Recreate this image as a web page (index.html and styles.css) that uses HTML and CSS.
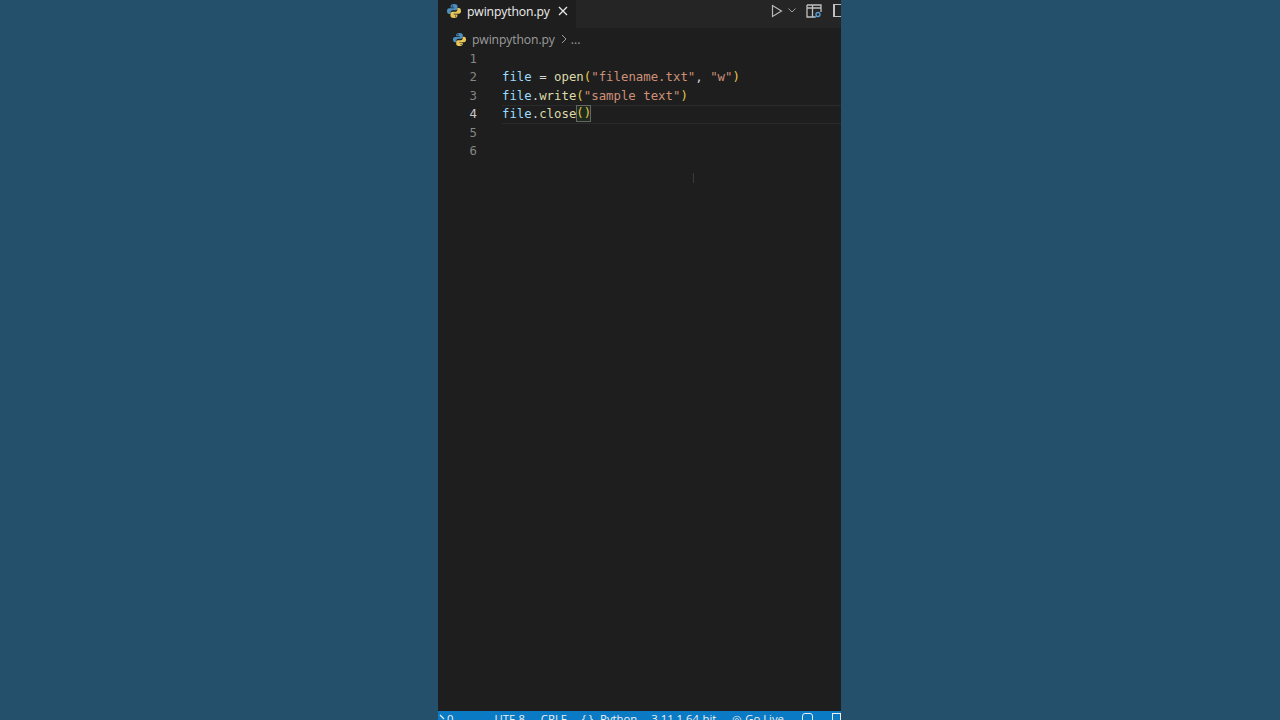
FILE: index.html
```html
<!DOCTYPE html>
<html lang="en">
<head>
<meta charset="utf-8">
<title>pwinpython.py</title>
<link rel="stylesheet" href="styles.css">
</head>
<body>
<main class="window">
  <header class="tabbar">
    <div class="tab">
      <svg class="py-icon" viewBox="0 0 16 16"><path class="py-blue" d="M8 1C5.8 1 4.6 1.800 4.6 3v1.600H8.200v.6H3.200C1.800 5.200 1 6.300 1 8s.8 3 2.200 3h1.400V9.300c0-1.200 1-2.100 2.200-2.100h2.900c1 0 1.800-.8 1.800-1.800V3c0-1.200-1.400-2-3.500-2zM6.300 2.200a.7.7 0 1 1 0 1.400.7.7 0 0 1 0-1.400z"/><path class="py-yellow" d="M8 15c2.200 0 3.400-.8 3.400-2v-1.600H7.800v-.6h5C14.200 10.800 15 9.700 15 8s-.8-3-2.200-3h-1.400v1.700c0 1.200-1 2.100-2.200 2.100H6.300c-1 0-1.800.8-1.800 1.800V13c0 1.200 1.400 2 3.500 2zm1.700-1.200a.7.7 0 1 1 0-1.400.7.7 0 0 1 0 1.400z"/></svg>
      <span class="tab-name">pwinpython.py</span>
      <svg class="close" viewBox="0 0 10 10"><path d="M1 1l8 8M9 1l-8 8"/></svg>
    </div>
    <div class="actions">
      <svg class="run" viewBox="0 0 12 14"><path d="M1.500 1.500v11l9-5.500z"/></svg>
      <svg class="chev" viewBox="0 0 8 5"><path d="M.5.500 4 4 7.500.500"/></svg>
      <svg class="split" viewBox="0 0 16 14"><path d="M1 1h14v7M1 1v12h8M6.500 1v12M1 4h14"/><circle cx="12" cy="10.500" r="2"/><path class="lens" d="M10.500 12 9 13.500"/></svg>
      <span class="panel"></span>
    </div>
  </header>
  <nav class="crumbs">
    <svg class="py-icon" viewBox="0 0 16 16"><path class="py-blue" d="M8 1C5.8 1 4.6 1.800 4.6 3v1.600H8.200v.6H3.200C1.800 5.200 1 6.300 1 8s.8 3 2.200 3h1.400V9.300c0-1.200 1-2.100 2.200-2.100h2.900c1 0 1.800-.8 1.800-1.800V3c0-1.200-1.400-2-3.500-2zM6.300 2.200a.7.7 0 1 1 0 1.400.7.7 0 0 1 0-1.400z"/><path class="py-yellow" d="M8 15c2.200 0 3.400-.8 3.400-2v-1.600H7.800v-.6h5C14.200 10.800 15 9.700 15 8s-.8-3-2.200-3h-1.400v1.700c0 1.200-1 2.100-2.200 2.100H6.300c-1 0-1.800.8-1.800 1.800V13c0 1.200 1.400 2 3.500 2zm1.700-1.200a.7.7 0 1 1 0-1.400.7.7 0 0 1 0 1.400z"/></svg>
    <span class="crumb-name">pwinpython.py</span>
    <svg class="crumb-sep" viewBox="0 0 6 10"><path d="M1 1l4 4-4 4"/></svg>
    <span class="crumb-more">...</span>
  </nav>
  <section class="editor">
    <div class="line"><span class="num">1</span><code class="code"></code></div>
    <div class="line"><span class="num">2</span><code class="code"><span class="var">file</span> <span class="op">=</span> <span class="fn">open</span><span class="br">(</span><span class="str">"filename.txt"</span><span class="op">,</span> <span class="str">"w"</span><span class="br">)</span></code></div>
    <div class="line"><span class="num">3</span><code class="code"><span class="var">file</span><span class="op">.</span><span class="fn">write</span><span class="br">(</span><span class="str">"sample text"</span><span class="br">)</span></code></div>
    <div class="line current"><span class="num">4</span><code class="code"><span class="var">file</span><span class="op">.</span><span class="fn">close</span><span class="match"><span class="br">(</span><span class="br">)</span></span></code></div>
    <div class="line"><span class="num">5</span><code class="code"></code></div>
    <div class="line"><span class="num">6</span><code class="code"></code></div>
    <span class="ibeam"></span>
  </section>
  <footer class="status">
    <svg class="st-remote-icon" viewBox="0 0 6 9"><path d="M1 1l4 4"/></svg>
    <span class="st-remote">0</span>
    <span class="st-enc">UTF-8</span>
    <span class="st-eol">CRLF</span>
    <span class="st-lang">{ }</span>
    <span class="st-py">Python</span>
    <span class="st-ver">3.11.1 64-bit</span>
    <span class="st-live">◎ Go Live</span>
    <span class="st-a"></span>
    <span class="st-b"></span>
  </footer>
</main>
</body>
</html>
```
FILE: styles.css
```css
* { box-sizing: border-box; }
html, body { margin: 0; height: 100%; overflow: hidden; }
body { background: #24506c; padding-left: 438px; }
.window {
  width: 403px; height: 720px; background: #1e1e1e; display: flex; flex-direction: column;
  overflow: hidden; position: relative;
  font-family: "Open Sans", "Noto Sans", sans-serif;
}
.tabbar { height: 28px; flex: none; background: #252525; display: flex; justify-content: space-between; }
.tab { width: 138px; height: 100%; background: #1e1e1e; display: flex; align-items: center; padding: 0 0 6px 8px; }
.py-icon { width: 16px; height: 16px; flex: none; }
.py-blue { fill: #4a8fc0; }
.py-yellow { fill: #e8c75a; }
.tab-name { color: #eeeeee; font-size: 12.200px; margin-left: 5px; letter-spacing: -.12px; }
.close { width: 10px; height: 10px; margin-left: 8px; fill: none; stroke: #e8e8e8; stroke-width: 1.300; flex: none; }
.actions { display: flex; align-items: center; padding-bottom: 7px; width: 72px; flex: none; }
.run { width: 12px; height: 14px; margin-left: 2px; fill: none; stroke: #b8b8b8; stroke-width: 1.200; flex: none; }
.chev { width: 8px; height: 5px; margin-left: 5px; fill: none; stroke: #a0a0a0; stroke-width: 1; flex: none; }
.split { width: 16px; height: 14px; margin-left: 10px; fill: none; stroke: #c0c0c0; stroke-width: 1.300; flex: none; }
.split circle { stroke: #5a9fd8; }
.split .lens { stroke: #5a9fd8; }
.panel { width: 14px; height: 13px; margin-left: 11px; flex: none; border: 1.500px solid #c0c0c0; border-left-width: 2px; }
.crumbs { height: 22px; flex: none; display: flex; align-items: center; padding-left: 14px; color: #9c9c9c; font-size: 12.200px; }
.crumbs .py-icon { width: 15px; height: 15px; }
.crumb-name { margin-left: 5px; letter-spacing: -.12px; }
.crumb-sep { width: 6px; height: 10px; margin-left: 6px; fill: none; stroke: #9c9c9c; stroke-width: 1; }
.crumb-more { margin-left: 4px; }
.editor { flex: 1; }
.line { height: 18.450px; display: flex; align-items: flex-start; font-family: "DejaVu Sans Mono", monospace; font-size: 12.350px; }
.num { width: 39px; text-align: right; color: #858585; flex: none; line-height: 18px; }
.code { margin-left: 25px; white-space: pre; font-family: inherit; font-size: inherit; flex: 1; height: 100%; display: block; line-height: 18px; }
.current .code { border-top: 1px solid #2a2a2a; border-bottom: 1px solid #2a2a2a; line-height: 16.500px; }
.current .num { color: #c6c6c6; }
.var { color: #9cdcfe; }
.op { color: #d4d4d4; }
.fn { color: #dcdcaa; }
.br { color: #e6c84c; }
.str { color: #ce9178; }
.match { display: inline-block; background: #1f2a1e; outline: 1px solid #666; outline-offset: -1px; height: 17px; line-height: 17px; margin-top: -1px; vertical-align: top; }
.ibeam { position: absolute; left: 255px; top: 173px; width: 1px; height: 10px; background: #3a3a3a; }
.status {
  height: 9px; flex: none; background: #0a7ac4; color: #f0f0f0; font-size: 11.300px; line-height: 16px;
  display: flex; overflow: hidden; white-space: nowrap; position: relative;
}
.st-remote-icon { width: 6px; height: 9px; fill: none; stroke: #eee; stroke-width: 1.200; flex: none; position: absolute; left: 1px; top: 3px; }
.st-remote { margin-left: 9px; }
.st-enc { margin-left: 41px; }
.st-eol { margin-left: 16px; }
.st-lang { margin-left: 15px; }
.st-py { margin-left: 7px; }
.st-ver { margin-left: 14px; }
.st-live { margin-left: 16px; }
.st-a { width: 11px; height: 12px; margin: 2px 0 0 18px; border: 1.500px solid #eee; border-radius: 3px; flex: none; }
.st-b { width: 9px; height: 12px; margin: 2px 0 0 19px; border: 1.500px solid #eee; flex: none; }
```
